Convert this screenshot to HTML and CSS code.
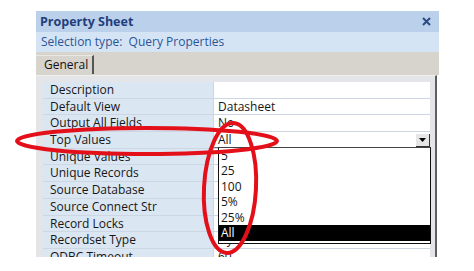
FILE: index.html
```html
<!DOCTYPE html>
<html>
<head>
	<meta charset="utf-8" />
	<title>Property Sheet</title>
	<link rel="stylesheet" href="styles.css">
</head>
<body>
	<div class="hoja">
		<div class="titulo">
			<span>Property Sheet</span>
			<svg class="cerrar" width="9" height="9" viewBox="0 0 9 9"><path d="M1 1L8 8M8 1L1 8" stroke="#2b4b84" stroke-width="2"/></svg>
		</div>
		<div class="seleccion">Selection type:&nbsp; Query Properties</div>
		<div class="pestanas">
			<div class="pestana">General</div>
		</div>
		<div class="cuerpo">
			<div class="rejilla">
				<div class="etq">Description</div><div class="val"></div>
				<div class="etq">Default View</div><div class="val">Datasheet</div>
				<div class="etq">Output All Fields</div><div class="val">No</div>
				<div class="etq">Top Values</div>
				<div class="val combo">
					<span>All</span>
					<span class="boton"><svg width="7" height="4" viewBox="0 0 7 4"><path d="M0 0H7L3.5 4Z" fill="#000"/></svg></span>
					<ul class="lista">
						<li class="primero">5</li>
						<li>25</li>
						<li>100</li>
						<li>5%</li>
						<li>25%</li>
						<li class="marcado">All</li>
					</ul>
				</div>
				<div class="etq">Unique Values</div><div class="val">No</div>
				<div class="etq">Unique Records</div><div class="val">No</div>
				<div class="etq">Source Database</div><div class="val">(current)</div>
				<div class="etq">Source Connect Str</div><div class="val"></div>
				<div class="etq">Record Locks</div><div class="val">No Locks</div>
				<div class="etq">Recordset Type</div><div class="val">Dynaset</div>
				<div class="etq">ODBC Timeout</div><div class="val">60</div>
			</div>
		</div>
	</div>

	<svg class="marcas" width="474" height="271" viewBox="0 0 474 271">
		<ellipse cx="147" cy="141" rx="130" ry="13" fill="none" stroke="#e3101a" stroke-width="4"/>
		<ellipse cx="230" cy="188" rx="26" ry="65" transform="rotate(3 230 188)" fill="none" stroke="#e3101a" stroke-width="4"/>
	</svg>
</body>
</html>
```

FILE: styles.css
```css
body {
	margin: 0;
	background-color: #ffffff;
	font-family: "Open Sans", "Noto Sans", sans-serif;
	position: relative;
}

.hoja {
	margin: 11px 0 0 36px;
	width: 403px;
}

.titulo {
	height: 21px;
	background-color: #bbd0ea;
	display: flex;
	align-items: center;
	justify-content: space-between;
	padding: 0 8px 0 4px;
	font-size: 12.5px;
	font-weight: bold;
	color: #1f3f7c;
}

.seleccion {
	height: 20px;
	line-height: 20px;
	background-color: #d5e4f5;
	padding-left: 5px;
	font-size: 12px;
	color: #2c5596;
}

.pestanas {
	height: 23px;
	background-color: #d7d3cd;
	display: flex;
	align-items: flex-end;
}

.pestana {
	height: 18px;
	line-height: 17px;
	padding: 0 4px 0 8px;
	margin-bottom: 1px;
	font-size: 12px;
	color: #111111;
	border-right: 2px solid #555555;
	border-top: 1px solid #ece9e4;
}

.cuerpo {
	width: 401px;
	height: 182px;
	box-sizing: border-box;
	padding: 6px 5px 0 7px;
	background-color: #e3e5e9;
	border-top: 1px solid #f1efeb;
	border-right: 2px solid #5f5f5f;
	overflow: hidden;
}

.rejilla {
	display: grid;
	grid-template-columns: 170px 1fr;
	grid-auto-rows: 15.7px;
	gap: 1px;
	background-color: #cdd6e3;
	font-size: 12px;
	color: #161616;
}

.etq {
	background-color: #dbe6f3;
	padding-left: 7px;
	line-height: 15.7px;
	white-space: nowrap;
}

.val {
	background-color: #ffffff;
	padding-left: 4px;
	line-height: 15.7px;
	white-space: nowrap;
}

.combo {
	position: relative;
	display: flex;
	justify-content: space-between;
	box-shadow: inset 0 -1px 0 #6d6d6d;
}

.boton {
	width: 13px;
	height: 12px;
	margin-top: 2px;
	background-color: #e6e6e6;
	border-right: 1px solid #333333;
	border-bottom: 1px solid #333333;
	display: flex;
	align-items: center;
	justify-content: center;
}

.lista {
	position: absolute;
	left: 4px;
	top: 15px;
	width: 211px;
	height: 95px;
	margin: 0;
	padding: 0;
	list-style: none;
	background-color: #ffffff;
	border: 1px solid #111111;
	border-top: 1px solid #444444;
	overflow: hidden;
	z-index: 2;
}

.lista li {
	height: 15.4px;
	line-height: 15.4px;
	padding-left: 2px;
	color: #151515;
}

.lista .primero {
	margin-top: -3px;
	height: 18.4px;
	line-height: 21px;
}

.lista .marcado {
	background-color: #000000;
	color: #ffffff;
	height: 16px;
}

.marcas {
	position: absolute;
	left: 0;
	top: 0;
	z-index: 5;
}
```
